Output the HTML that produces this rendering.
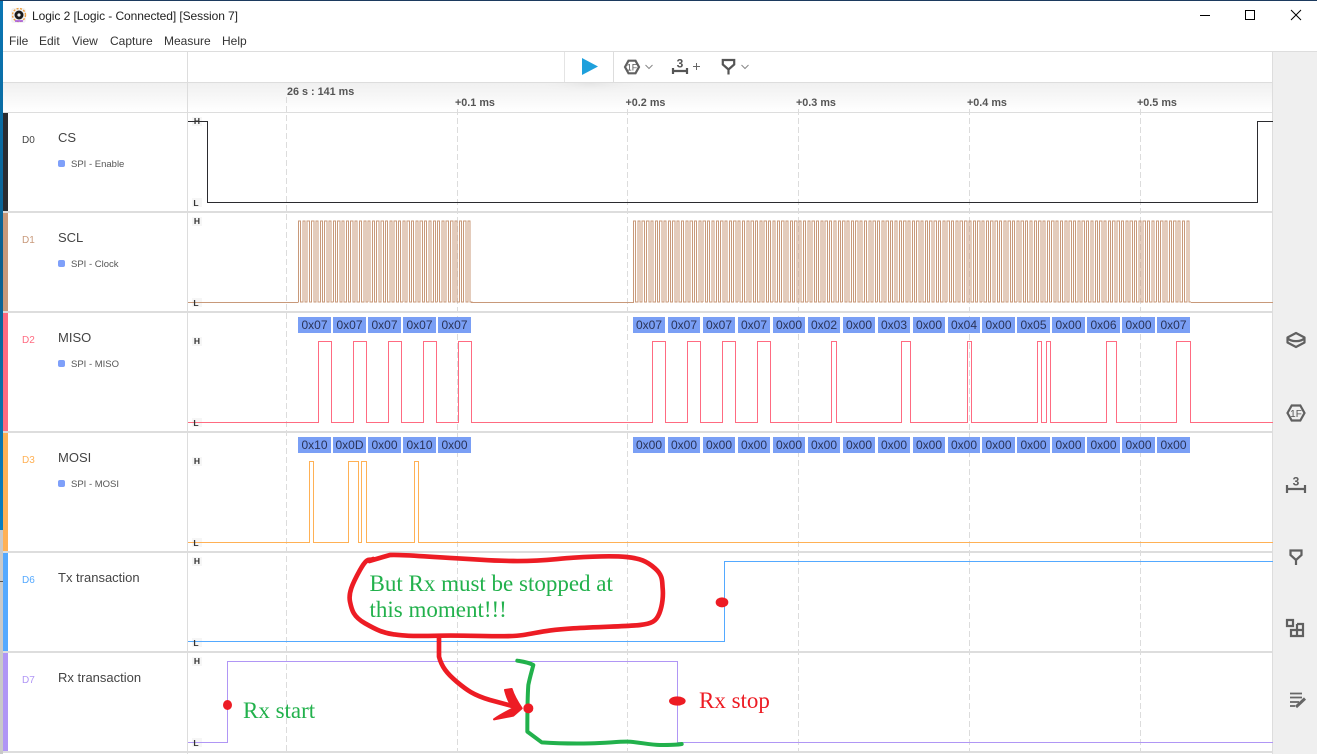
<!DOCTYPE html>
<html><head><meta charset="utf-8"><title>Logic 2</title>
<style>
html,body{margin:0;padding:0;background:#fff;width:1317px;height:754px;overflow:hidden}
svg{display:block}
text{font-family:"Liberation Sans",sans-serif}
.serif{font-family:"Liberation Serif",serif}
.nm{font-size:13px;fill:#444}
.dn{font-size:10px}
.sub{font-size:9.5px;fill:#555}
.tk{font-size:10.8px;font-weight:bold;fill:#555}
.mn{font-size:12px;fill:#333}
.hl{font-size:8.5px;font-weight:bold;fill:#333;text-anchor:middle}
.bx{font-size:12px;fill:#2a3358;text-anchor:middle}
.ic{fill:none;stroke:#606060;stroke-width:2.2}
</style></head><body>
<svg width="1317" height="754" viewBox="0 0 1317 754" xmlns="http://www.w3.org/2000/svg">
<defs>
<linearGradient id="hd" x1="0" y1="0" x2="0" y2="1"><stop offset="0" stop-color="#f0f0f0"/><stop offset="1" stop-color="#fff"/></linearGradient>
<radialGradient id="sh" cx=".5" cy="0" r=".6"><stop offset="0" stop-color="#e4e4e4"/><stop offset="1" stop-color="#f2f2f2" stop-opacity="0"/></radialGradient>
<linearGradient id="lft" x1="0" y1="0" x2="0" y2="1"><stop offset="0" stop-color="#0a76b4"/><stop offset=".5" stop-color="#0b5f8e"/><stop offset="1" stop-color="#0a7fc0"/></linearGradient>
<path id="byte" fill="none" stroke="#c8997a" stroke-width="1" d="M0 302V221h2.18V302h2.18V221h2.18V302h2.18V221h2.18V302h2.18V221h2.18V302h2.18V221h2.18V302h2.18V221h2.18V302h2.18V221h2.18V302h2.18V221h2.18V302h2.18"/>
</defs>

<!-- window frame -->
<rect width="1317" height="754" fill="#fff"/>
<rect x="0" y="0" width="3" height="530" fill="url(#lft)"/>
<rect x="0" y="530" width="3" height="224" fill="#c9c9c9"/>
<rect x="0" y="581" width="3" height="1" fill="#555"/>
<rect x="0" y="0" width="1317" height="1" fill="#1c3a5e"/>

<!-- app icon -->
<rect x="11" y="8" width="15" height="15" rx="3" fill="#f2f2f2"/>
<circle cx="19" cy="15" r="6.5" fill="none" stroke="#f0a040" stroke-width="1.4" stroke-dasharray="2 1.5"/>
<path d="M15 21h8" stroke="#a050e0" stroke-width="1.5"/>
<circle cx="19" cy="15" r="4.5" fill="#1c1c1c"/>
<circle cx="19" cy="15" r="1.6" fill="#f2f2f2"/>

<!-- title -->
<text x="32" y="20" font-size="12" fill="#222" textLength="206" lengthAdjust="spacing">Logic 2 [Logic - Connected] [Session 7]</text>
<path d="M1200 15.5h10" stroke="#000" stroke-width="1"/>
<rect x="1245.5" y="10.5" width="9" height="9" fill="none" stroke="#000" stroke-width="1"/>
<path d="M1291 10l10 10M1301 10l-10 10" stroke="#000" stroke-width="1"/>

<!-- menu -->
<text class="mn" x="9" y="45">File</text>
<text class="mn" x="39" y="45">Edit</text>
<text class="mn" x="72" y="45">View</text>
<text class="mn" x="110" y="45">Capture</text>
<text class="mn" x="164" y="45">Measure</text>
<text class="mn" x="222" y="45">Help</text>

<!-- structure -->
<rect x="3" y="51" width="1314" height="1" fill="#ddd"/>
<rect x="3" y="83" width="1270" height="29" fill="url(#hd)"/>
<rect x="3" y="82" width="1270" height="1" fill="#ddd"/>
<rect x="3" y="112" width="1270" height="1" fill="#ddd"/>
<rect x="1273" y="52" width="44" height="702" fill="#efefef"/>
<rect x="1272" y="52" width="1" height="702" fill="#ddd"/>
<rect x="187" y="52" width="1" height="702" fill="#ddd"/>

<!-- toolbar -->
<rect x="545" y="83" width="90" height="16" fill="url(#sh)"/>
<rect x="564" y="52" width="1" height="30" fill="#e4e4e4"/>
<rect x="613" y="52" width="1" height="30" fill="#ddd"/>
<path d="M582 58L598 66.5L582 75Z" fill="#1ea0dc"/>
<path class="ic" d="M625 67l3.5-6.3h7l3.5 6.3-3.5 6.3h-7Z"/>
<text x="632" y="70.5" font-size="9" fill="#555" text-anchor="middle">1F</text>
<path d="M645.5 65l3.5 3.5 3.5-3.5" fill="none" stroke="#888" stroke-width="1"/>
<text x="680" y="67.5" font-size="12" font-weight="bold" fill="#555" text-anchor="middle">3</text>
<path class="ic" style="stroke:#555" d="M673 68v6M687 68v6M673 71h14"/>
<path d="M693 66.5h7M696.5 63v7" stroke="#666" stroke-width="1"/>
<path class="ic" style="stroke:#555" d="M722.8 60h11.4v4.5l-5.7 5-5.7-5ZM728.5 69.5V74.5"/>
<path d="M741.5 65l3.5 3.5 3.5-3.5" fill="none" stroke="#888" stroke-width="1"/>

<!-- time labels -->
<text class="tk" x="287" y="95">26 s : 141 ms</text>
<text class="tk" x="455" y="106">+0.1 ms</text>
<text class="tk" x="625.5" y="106">+0.2 ms</text>
<text class="tk" x="796" y="106">+0.3 ms</text>
<text class="tk" x="967" y="106">+0.4 ms</text>
<text class="tk" x="1137" y="106">+0.5 ms</text>

<!-- grid -->
<g stroke="#dcdcdc" stroke-width="1" stroke-dasharray="6 3">
<path d="M286.5 97V751"/>
<path d="M457.5 109V751M627.5 109V751M798.5 109V751M969.5 109V751M1140.5 109V751"/>
</g>

<!-- row separators -->
<g fill="#ddd">
<rect x="3" y="211" width="1270" height="2"/>
<rect x="3" y="311" width="1270" height="2"/>
<rect x="3" y="431" width="1270" height="2"/>
<rect x="3" y="551" width="1270" height="2"/>
<rect x="3" y="651" width="1270" height="2"/>
<rect x="3" y="751" width="1270" height="2"/>
</g>

<!-- colour strips -->
<rect x="3" y="113" width="5" height="98" fill="#2b2b2f"/>
<rect x="3" y="213" width="5" height="98" fill="#c8997a"/>
<rect x="3" y="313" width="5" height="118" fill="#ff6b81"/>
<rect x="3" y="433" width="5" height="118" fill="#ffb155"/>
<rect x="3" y="553" width="5" height="98" fill="#54a9ff"/>
<rect x="3" y="653" width="5" height="98" fill="#b096f5"/>

<!-- row labels -->
<text class="dn" x="22" y="143" fill="#444">D0</text>
<text class="nm" x="58" y="142">CS</text>
<rect x="58" y="160" width="7" height="7" rx="2" fill="#7fa0fa"/>
<text class="sub" x="71" y="167">SPI - Enable</text>

<text class="dn" x="22" y="243" fill="#c8997a">D1</text>
<text class="nm" x="58" y="242">SCL</text>
<rect x="58" y="260" width="7" height="7" rx="2" fill="#7fa0fa"/>
<text class="sub" x="71" y="267">SPI - Clock</text>

<text class="dn" x="22" y="343" fill="#ff6b81">D2</text>
<text class="nm" x="58" y="342">MISO</text>
<rect x="58" y="360" width="7" height="7" rx="2" fill="#7fa0fa"/>
<text class="sub" x="71" y="367">SPI - MISO</text>

<text class="dn" x="22" y="463" fill="#ffb155">D3</text>
<text class="nm" x="58" y="462">MOSI</text>
<rect x="58" y="480" width="7" height="7" rx="2" fill="#7fa0fa"/>
<text class="sub" x="71" y="487">SPI - MOSI</text>

<text class="dn" x="22" y="583" fill="#54a9ff">D6</text>
<text class="nm" x="58" y="582">Tx transaction</text>

<text class="dn" x="22" y="683" fill="#b096f5">D7</text>
<text class="nm" x="58" y="682">Rx transaction</text>

<!-- H / L marker backgrounds -->
<g fill="#f6f6f6">
<rect x="192" y="117" width="10" height="9"/><rect x="192" y="198" width="10" height="9"/>
<rect x="192" y="217" width="10" height="9"/><rect x="192" y="298" width="10" height="9"/>
<rect x="192" y="337" width="10" height="9"/><rect x="192" y="418" width="10" height="9"/>
<rect x="192" y="457" width="10" height="9"/><rect x="192" y="538" width="10" height="9"/>
<rect x="192" y="557" width="10" height="9"/><rect x="192" y="638" width="10" height="9"/>
<rect x="192" y="657" width="10" height="9"/><rect x="192" y="738" width="10" height="9"/>
</g>

<!-- traces -->
<path fill="none" stroke="#2b2b2f" d="M188 121.5H207.5V202.5H1257.5V121.5H1273"/>

<g shape-rendering="crispEdges">
<path fill="none" stroke="#c8997a" d="M188 302.5H298.5M471 302.5H634M1191 302.5H1273"/>
<use href="#byte" x="298.5"/><use href="#byte" x="333.25"/><use href="#byte" x="368"/><use href="#byte" x="402.75"/><use href="#byte" x="437.5"/>
<use href="#byte" x="633.5"/><use href="#byte" x="668.35"/><use href="#byte" x="703.2"/><use href="#byte" x="738.05"/><use href="#byte" x="772.9"/><use href="#byte" x="807.75"/><use href="#byte" x="842.6"/><use href="#byte" x="877.45"/><use href="#byte" x="912.3"/><use href="#byte" x="947.15"/><use href="#byte" x="982"/><use href="#byte" x="1016.85"/><use href="#byte" x="1051.7"/><use href="#byte" x="1086.55"/><use href="#byte" x="1121.4"/><use href="#byte" x="1156.25"/>
</g>

<path fill="none" stroke="#ff6b81" d="M188 422.5H318.5V341.5H331.5V422.5H353.5V341.5H366.5V422.5H388.5V341.5H401.5V422.5H423.5V341.5H436.5V422.5H458.5V341.5H471.5V422.5H652.5V341.5H665.5V422.5H687.5V341.5H700.5V422.5H722.5V341.5H735.5V422.5H757.5V341.5H770.5V422.5H831.5V341.5H836.5V422.5H901.5V341.5H910.5V422.5H967.5V341.5H971.5V422.5H1037.5V341.5H1041.5V422.5H1046.5V341.5H1050.5V422.5H1106.5V341.5H1116.5V422.5H1176.5V341.5H1190.5V422.5H1273"/>

<path fill="none" stroke="#ffb155" d="M188 542.5H309.5V461.5H313.5V542.5H348.5V461.5H358.5V542.5H361.5V461.5H366.5V542.5H414.5V461.5H418.5V542.5H1273"/>

<path fill="none" stroke="#54a9ff" d="M188 641.5H724.5V561.5H1273"/>

<path fill="none" stroke="#b096f5" d="M188 742.5H227.5V661.5H677.5V742.5H1273"/>

<!-- H / L markers -->
<text class="hl" x="197" y="124">H</text><text class="hl" x="196" y="206">L</text>
<text class="hl" x="197" y="224">H</text><text class="hl" x="196" y="306">L</text>
<text class="hl" x="197" y="344">H</text><text class="hl" x="196" y="426">L</text>
<text class="hl" x="197" y="464">H</text><text class="hl" x="196" y="546">L</text>
<text class="hl" x="197" y="564">H</text><text class="hl" x="196" y="646">L</text>
<text class="hl" x="197" y="664">H</text><text class="hl" x="196" y="746">L</text>

<!-- data boxes -->
<g fill="#7a9ff5">
<rect x="298" y="317" width="33" height="16"/><rect x="333" y="317" width="33" height="16"/><rect x="368" y="317" width="33" height="16"/><rect x="403" y="317" width="33" height="16"/><rect x="438" y="317" width="33" height="16"/>
<rect x="633" y="317" width="32" height="16"/><rect x="668" y="317" width="32" height="16"/><rect x="703" y="317" width="32" height="16"/><rect x="738" y="317" width="32" height="16"/><rect x="773" y="317" width="32" height="16"/><rect x="808" y="317" width="32" height="16"/><rect x="843" y="317" width="32" height="16"/><rect x="878" y="317" width="32" height="16"/><rect x="913" y="317" width="32" height="16"/><rect x="948" y="317" width="32" height="16"/><rect x="982" y="317" width="33" height="16"/><rect x="1017" y="317" width="33" height="16"/><rect x="1052" y="317" width="33" height="16"/><rect x="1087" y="317" width="33" height="16"/><rect x="1122" y="317" width="33" height="16"/><rect x="1157" y="317" width="33" height="16"/>
<rect x="298" y="437" width="33" height="16"/><rect x="333" y="437" width="33" height="16"/><rect x="368" y="437" width="33" height="16"/><rect x="403" y="437" width="33" height="16"/><rect x="438" y="437" width="33" height="16"/>
<rect x="633" y="437" width="32" height="16"/><rect x="668" y="437" width="32" height="16"/><rect x="703" y="437" width="32" height="16"/><rect x="738" y="437" width="32" height="16"/><rect x="773" y="437" width="32" height="16"/><rect x="808" y="437" width="32" height="16"/><rect x="843" y="437" width="32" height="16"/><rect x="878" y="437" width="32" height="16"/><rect x="913" y="437" width="32" height="16"/><rect x="948" y="437" width="32" height="16"/><rect x="982" y="437" width="33" height="16"/><rect x="1017" y="437" width="33" height="16"/><rect x="1052" y="437" width="33" height="16"/><rect x="1087" y="437" width="33" height="16"/><rect x="1122" y="437" width="33" height="16"/><rect x="1157" y="437" width="33" height="16"/>
</g>
<text class="bx" x="314.5" y="329">0x07</text><text class="bx" x="349.5" y="329">0x07</text><text class="bx" x="384.5" y="329">0x07</text><text class="bx" x="419.5" y="329">0x07</text><text class="bx" x="454.5" y="329">0x07</text>
<text class="bx" x="649" y="329">0x07</text><text class="bx" x="684" y="329">0x07</text><text class="bx" x="719" y="329">0x07</text><text class="bx" x="754" y="329">0x07</text><text class="bx" x="789" y="329">0x00</text><text class="bx" x="824" y="329">0x02</text><text class="bx" x="859" y="329">0x00</text><text class="bx" x="894" y="329">0x03</text><text class="bx" x="929" y="329">0x00</text><text class="bx" x="964" y="329">0x04</text><text class="bx" x="998.5" y="329">0x00</text><text class="bx" x="1033.5" y="329">0x05</text><text class="bx" x="1068.5" y="329">0x00</text><text class="bx" x="1103.5" y="329">0x06</text><text class="bx" x="1138.5" y="329">0x00</text><text class="bx" x="1173.5" y="329">0x07</text>

<text class="bx" x="314.5" y="449">0x10</text><text class="bx" x="349.5" y="449">0x0D</text><text class="bx" x="384.5" y="449">0x00</text><text class="bx" x="419.5" y="449">0x10</text><text class="bx" x="454.5" y="449">0x00</text>
<text class="bx" x="649" y="449">0x00</text><text class="bx" x="684" y="449">0x00</text><text class="bx" x="719" y="449">0x00</text><text class="bx" x="754" y="449">0x00</text><text class="bx" x="789" y="449">0x00</text><text class="bx" x="824" y="449">0x00</text><text class="bx" x="859" y="449">0x00</text><text class="bx" x="894" y="449">0x00</text><text class="bx" x="929" y="449">0x00</text><text class="bx" x="964" y="449">0x00</text><text class="bx" x="998.5" y="449">0x00</text><text class="bx" x="1033.5" y="449">0x00</text><text class="bx" x="1068.5" y="449">0x00</text><text class="bx" x="1103.5" y="449">0x00</text><text class="bx" x="1138.5" y="449">0x00</text><text class="bx" x="1173.5" y="449">0x00</text>

<!-- right sidebar icons -->
<path class="ic" stroke-linejoin="round" d="M1287.5 337.5L1296 333L1304.5 337.5V342.5L1296 347L1287.5 342.5ZM1288 338.5C1291 342 1301 342 1304 338.5"/>
<path class="ic" d="M1287.5 413l4.2-7.5h8.6l4.2 7.5-4.2 7.5h-8.6Z"/>
<text x="1296" y="417" font-size="10" fill="#555" text-anchor="middle">1F</text>
<text x="1296" y="485.5" font-size="12" font-weight="bold" fill="#606060" text-anchor="middle">3</text>
<path class="ic" d="M1287 485v8M1305 485v8M1287 489h18"/>
<path class="ic" d="M1290.5 550.5h11v4.5l-5.5 5-5.5-5ZM1296 560v5"/>
<path class="ic" d="M1287 620h6v6h-6ZM1297 624h6v12h-12v-6h12M1297 624v12"/>
<path d="M1290 693.5h12M1290 697.5h12M1290 702h9M1290 706h5" stroke="#666" stroke-width="1.8" fill="none"/>
<path d="M1296 707l9-8.5" stroke="#666" stroke-width="3" fill="none"/>

<!-- annotations -->
<g transform="translate(340 545) scale(.33333)" fill="none" stroke-linecap="round" stroke-linejoin="round">
<path stroke="#ed1c24" stroke-width="14" d="M88 48L150 30C190 28 250 35 350 40S430 47 520 48S640 42 700 38S820 32 860 36S920 48 945 70S966 110 968 130S968 180 958 205S935 236 900 240S780 245 700 250S600 262 550 270S400 270 300 272S190 272 160 268S110 255 75 235S35 195 30 170S35 120 60 75S88 50 100 42"/>
<path stroke="#ed1c24" stroke-width="14" d="M297 275V335C305 365 320 385 350 410S400 450 450 465L535 488"/>
<path fill="#ed1c24" stroke="#ed1c24" stroke-width="6" d="M495 435L515 432C522 455 535 475 545 490L520 512L462 523C480 510 500 500 520 490C508 475 500 455 495 435Z"/>
<path stroke="#22b14c" stroke-width="12" d="M532 347C550 350 565 352 580 360C575 380 570 395 565 420C562 460 562 520 562 560L605 592C650 595 700 596 750 595S830 590 860 590S930 600 960 600S1010 600 1025 597"/>
<circle cx="565" cy="490" r="15" fill="#ed1c24"/>
<ellipse cx="1146" cy="172" rx="19" ry="15" fill="#ed1c24"/>
<ellipse cx="1012" cy="468" rx="25" ry="14" fill="#ed1c24"/>
</g>
<ellipse cx="227.5" cy="705" rx="4.5" ry="5" fill="#ed1c24"/>
<text class="serif" x="369.5" y="591" font-size="23" fill="#22b14c">But Rx must be stopped at</text>
<text class="serif" x="369.5" y="617" font-size="23" fill="#22b14c">this moment!!!</text>
<text class="serif" x="243" y="718" font-size="23" fill="#22b14c">Rx start</text>
<text class="serif" x="699" y="708" font-size="23" fill="#ed1c24">Rx stop</text>
</svg>
</body></html>
